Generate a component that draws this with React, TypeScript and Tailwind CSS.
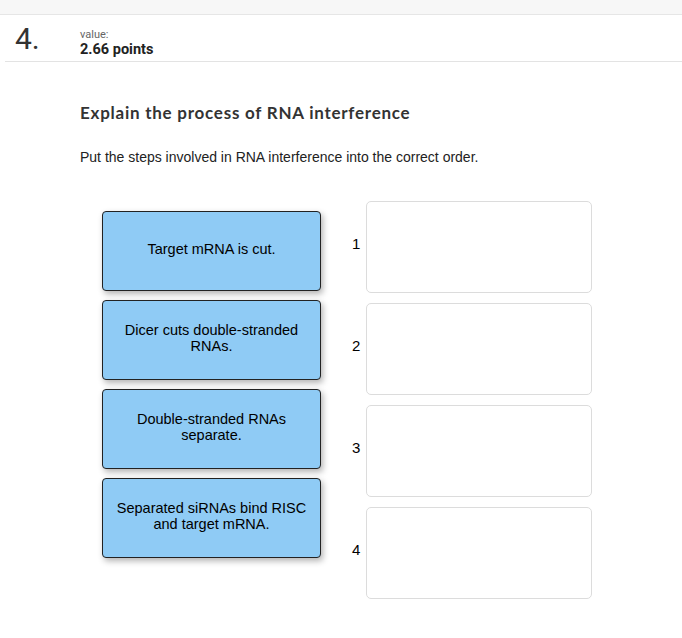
const steps = [
  ["Target mRNA is cut."],
  ["Dicer cuts double-stranded", "RNAs."],
  ["Double-stranded RNAs", "separate."],
  ["Separated siRNAs bind RISC", "and target mRNA."],
];

export default function App() {
  return (
    <div className="min-h-[638px] w-[682px] bg-white font-['Liberation_Sans',Arial,sans-serif] text-black">
      <div className="h-[15px] border-b border-[#e6e6e6] bg-[#f7f7f7]" />

      <header className="ml-[5px] flex h-[47px] items-start border-b border-[#e3e3e3]">
        <div className="w-[75px] pl-[10px] pt-[6px] font-['Roboto',sans-serif] text-[30px] leading-[36px] text-[#333]">
          4.
        </div>
        <div className="pt-[13px] font-['Roboto',sans-serif]">
          <div className="text-[11px] leading-[13px] text-[#666]">value:</div>
          <div className="mt-[1px] text-[14.5px] font-bold leading-[16px] text-[#222]">2.66 points</div>
        </div>
      </header>

      <main className="pl-[80px]">
        <h1 className="mt-[40px] font-['Lato',sans-serif] text-[17px] font-bold leading-[22px] tracking-[0.75px] text-[#333]">
          Explain the process of RNA interference
        </h1>
        <p className="mt-[25px] text-[14px] leading-[16px] text-[#222]">
          Put the steps involved in RNA interference into the correct order.
        </p>

        <div className="mt-[36px] flex items-start">
          <div className="ml-[22px] mt-[10px] flex w-[219px] flex-col gap-[9px]">
            {steps.map((lines, i) => (
              <div
                key={i}
                className="flex h-[80px] flex-col items-center justify-center rounded-[4px] border border-[#222] bg-[#8fcbf5] pb-[4px] text-center text-[14.5px] leading-[16px] shadow-[2px_3px_6px_rgba(0,0,0,0.3)]"
              >
                {lines.map((l) => (
                  <span key={l}>{l}</span>
                ))}
              </div>
            ))}
          </div>

          <div className="ml-[31px] flex flex-col gap-[10px]">
            {[1, 2, 3, 4].map((n) => (
              <div key={n} className="flex items-center">
                <span className="w-[14px] pb-[6px] text-[15px]">{n}</span>
                <div className="h-[92px] w-[226px] rounded-[5px] border border-[#dcdcdc] bg-white" />
              </div>
            ))}
          </div>
        </div>
      </main>
    </div>
  );
}
